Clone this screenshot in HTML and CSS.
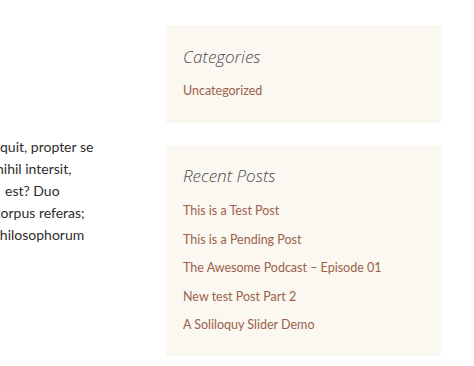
FILE: index.html
```html
<!DOCTYPE html>
<html>
<head>
<meta charset="utf-8">
<link rel="stylesheet" href="styles.css">
</head>
<body>
<div class="page">
  <main class="content">
    <p class="para">
      <span class="line l1">quit, propter se</span>
      <span class="line l2">nihil intersit,</span>
      <span class="line l3">est? Duo</span>
      <span class="line l4">corpus referas;</span>
      <span class="line l5">philosophorum</span>
    </p>
  </main>
  <aside class="sidebar">
    <section class="widget widget-cats">
      <h2 class="widget-title">Categories</h2>
      <ul class="links">
        <li><a href="#">Uncategorized</a></li>
      </ul>
    </section>
    <section class="widget widget-recent">
      <h2 class="widget-title">Recent Posts</h2>
      <ul class="links posts">
        <li><a href="#">This is a Test Post</a></li>
        <li><a href="#">This is a Pending Post</a></li>
        <li><a href="#">The Awesome Podcast – Episode 01</a></li>
        <li><a href="#">New test Post Part 2</a></li>
        <li><a href="#">A Soliloquy Slider Demo</a></li>
      </ul>
    </section>
  </aside>
</div>
</body>
</html>
```

FILE: styles.css
```css
html, body {
  margin: 0;
  padding: 0;
  background: #ffffff;
}
body {
  font-family: "Lato", "Noto Sans", sans-serif;
  width: 474px;
  height: 366px;
  overflow: hidden;
}
.page {
  display: flex;
  align-items: flex-start;
}
.content {
  width: 166px;
  flex: none;
  overflow: hidden;
  padding-top: 136px;
}
.para {
  margin: 0;
  font-size: 14px;
  line-height: 22px;
  color: #2e2e2e;
}
.line {
  display: block;
  white-space: nowrap;
}
.l1 { margin-left: 0; }
.l2 { margin-left: -4px; }
.l3 { margin-left: 5px; }
.l4 { margin-left: -6px; }
.l5 { margin-left: -8px; }

.sidebar {
  width: 275px;
  flex: none;
  padding-top: 25px;
  display: flex;
  flex-direction: column;
  gap: 23px;
}
.widget {
  background: #fbf7f1;
  padding: 20px 17px 21px 17px;
}
.widget-recent {
  padding-top: 18px;
  padding-bottom: 16px;
}
.widget-title {
  margin: 0;
  font-family: "Open Sans", "Noto Sans", sans-serif;
  font-weight: 300;
  font-style: italic;
  font-size: 17px;
  line-height: 24px;
  color: #4d4d4d;
}
.links {
  list-style: none;
  margin: 11px 0 0 0;
  padding: 0;
  font-size: 12.5px;
  line-height: 22px;
}
.posts {
  margin-top: 9px;
  line-height: 28.5px;
}
.links a {
  color: #9a624a;
  text-decoration: none;
}
```
